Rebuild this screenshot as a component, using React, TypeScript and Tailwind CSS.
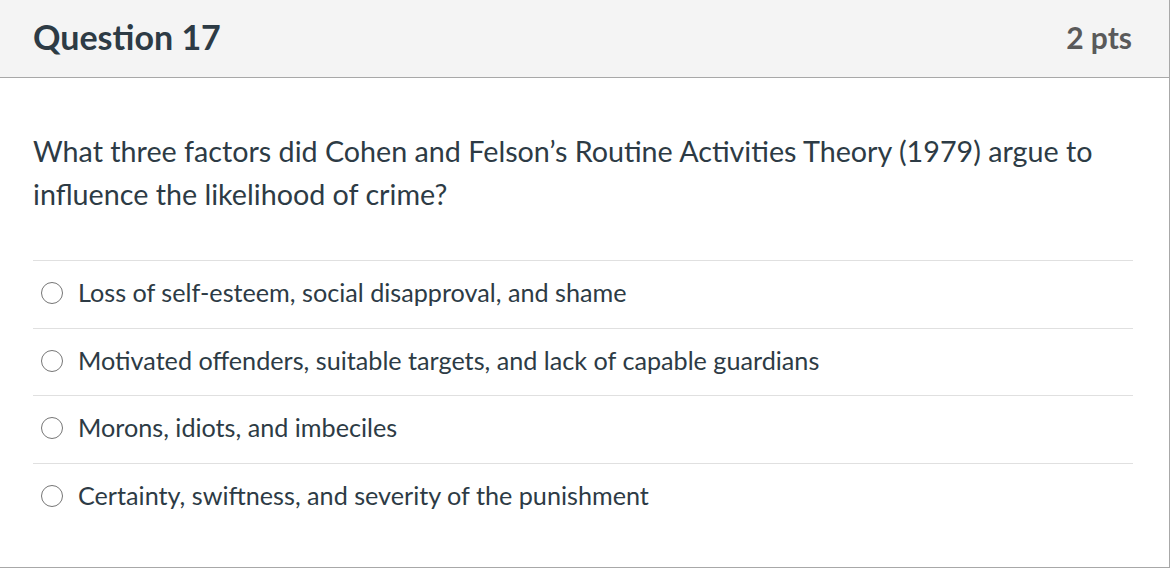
const answers = [
  'Loss of self-esteem, social disapproval, and shame',
  'Motivated offenders, suitable targets, and lack of capable guardians',
  'Morons, idiots, and imbeciles',
  'Certainty, swiftness, and severity of the punishment',
]

export default function App() {
  return (
    <div className="w-[1174px] h-[570px] bg-white" style={{ fontFamily: 'Lato, "Open Sans", sans-serif' }}>
      <div className="w-[1170px] h-[568px] border-r border-b border-[#a8a8a8] flex flex-col">
        {/* Header */}
        <div className="h-[78px] shrink-0 bg-[#f4f4f4] border-b border-[#a8a8a8] flex items-center justify-between pl-[33px] pr-[37px] pb-[3px]">
          <h2 className="text-[34px] font-bold text-[#2d3b45] leading-none">Question 17</h2>
          <span className="text-[30px] font-bold text-[#5a5a5a] leading-none">2 pts</span>
        </div>

        <div className="px-[33px] pr-[36px]">
          <p className="mt-[52px] text-[28.7px] leading-[43px] text-[#2d3b45]">
            What three factors did Cohen and Felson’s Routine Activities Theory (1979) argue to influence the likelihood of crime?
          </p>

          <div className="mt-[44px]">
            {answers.map(a => (
              <div key={a} className="h-[67.5px] border-t border-[#e0e0e0] flex items-center gap-[15px] pl-[8px] pb-[2px]">
                <span className="w-[22px] h-[22px] rounded-full border-[1.5px] border-[#767676] shrink-0" />
                <span className="text-[25.2px] text-[#2d3b45]">{a}</span>
              </div>
            ))}
          </div>
        </div>
      </div>
    </div>
  )
}
